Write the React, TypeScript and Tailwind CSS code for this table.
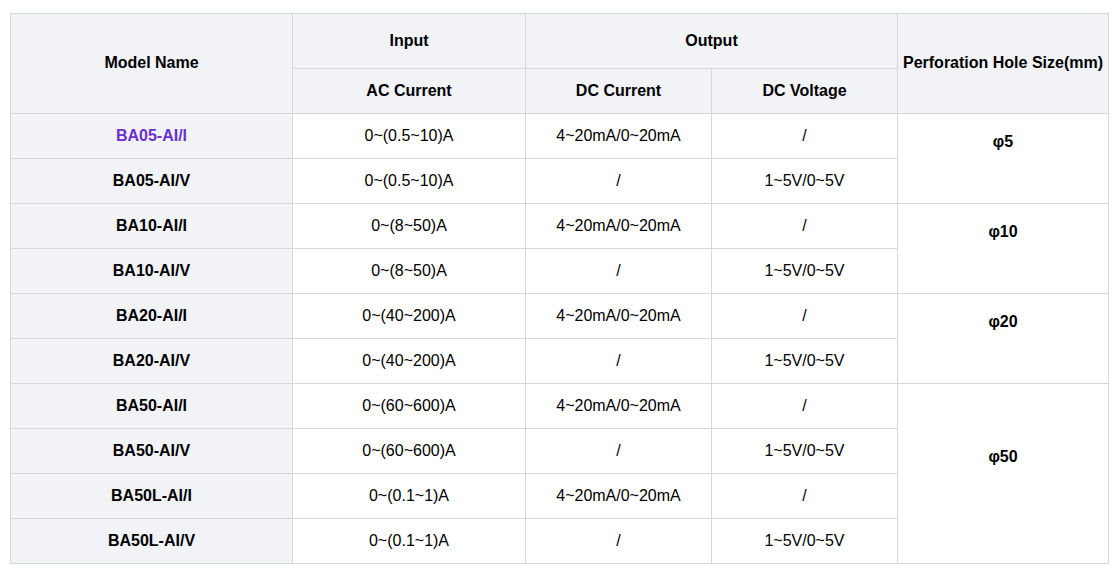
import React from "react";

const rows = [
  { m: "BA05-AI/I", ac: "0~(0.5~10)A", dc: "4~20mA/0~20mA", dv: "/", hole: "φ5", span: 2, purple: true },
  { m: "BA05-AI/V", ac: "0~(0.5~10)A", dc: "/", dv: "1~5V/0~5V" },
  { m: "BA10-AI/I", ac: "0~(8~50)A", dc: "4~20mA/0~20mA", dv: "/", hole: "φ10", span: 2 },
  { m: "BA10-AI/V", ac: "0~(8~50)A", dc: "/", dv: "1~5V/0~5V" },
  { m: "BA20-AI/I", ac: "0~(40~200)A", dc: "4~20mA/0~20mA", dv: "/", hole: "φ20", span: 2 },
  { m: "BA20-AI/V", ac: "0~(40~200)A", dc: "/", dv: "1~5V/0~5V" },
  { m: "BA50-AI/I", ac: "0~(60~600)A", dc: "4~20mA/0~20mA", dv: "/", hole: "φ50", span: 4 },
  { m: "BA50-AI/V", ac: "0~(60~600)A", dc: "/", dv: "1~5V/0~5V" },
  { m: "BA50L-AI/I", ac: "0~(0.1~1)A", dc: "4~20mA/0~20mA", dv: "/" },
  { m: "BA50L-AI/V", ac: "0~(0.1~1)A", dc: "/", dv: "1~5V/0~5V" },
] as { m: string; ac: string; dc: string; dv: string; hole?: string; span?: number; purple?: boolean }[];

const bd = "border border-[#d4d7dc]";

export default function App() {
  return (
    <div
      className="w-[1119px] h-[573px] bg-white pl-[10px] pt-[13px] text-black"
      style={{ fontFamily: '"Liberation Sans", Arial, sans-serif' }}
    >
      <table className="border-collapse table-fixed text-[16px] leading-[18px] text-center">
        <colgroup>
          <col className="w-[282px]" />
          <col className="w-[233px]" />
          <col className="w-[186px]" />
          <col className="w-[186px]" />
          <col className="w-[211px]" />
        </colgroup>
        <thead>
          <tr className="h-[55px]">
            <th rowSpan={2} className={`${bd} bg-[#f1f3f7] font-bold align-middle pb-[2px]`}>
              Model Name
            </th>
            <th className={`${bd} bg-[#f1f3f7] font-bold`}>Input</th>
            <th colSpan={2} className={`${bd} bg-[#f1f3f7] font-bold`}>Output</th>
            <th rowSpan={2} className={`${bd} bg-[#f1f3f7] font-bold px-0 pb-[2px] whitespace-nowrap`}>
              Perforation Hole Size(mm)
            </th>
          </tr>
          <tr className="h-[45px]">
            <th className={`${bd} bg-[#f1f3f7] font-bold`}>AC Current</th>
            <th className={`${bd} bg-[#f1f3f7] font-bold`}>DC Current</th>
            <th className={`${bd} bg-[#f1f3f7] font-bold`}>DC Voltage</th>
          </tr>
        </thead>
        <tbody>
          {rows.map((r) => (
            <tr key={r.m} className="h-[45px]">
              <th className={`${bd} bg-[#f1f3f7] font-bold ${r.purple ? "text-[#6b31d0]" : ""}`}>{r.m}</th>
              <td className={bd}>{r.ac}</td>
              <td className={bd}>{r.dc}</td>
              <td className={bd}>{r.dv}</td>
              {r.hole && (
                <td rowSpan={r.span} className={`${bd} font-bold align-middle pb-[34px]`}>
                  {r.hole}
                </td>
              )}
            </tr>
          ))}
        </tbody>
      </table>
    </div>
  );
}
